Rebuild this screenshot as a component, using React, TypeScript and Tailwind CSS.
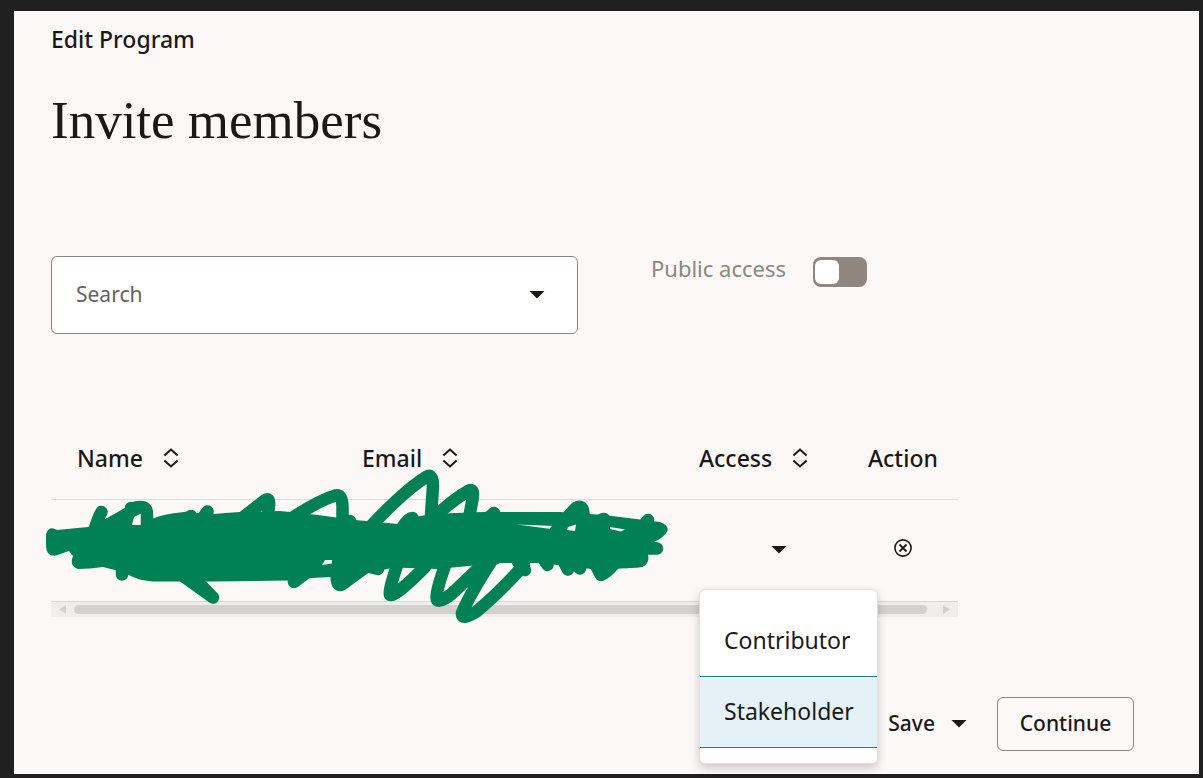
import React, { useState } from "react";

interface Column {
  key: string;
  label: string;
  sortable: boolean;
}

const columns: Column[] = [
  { key: "name", label: "Name", sortable: true },
  { key: "email", label: "Email", sortable: true },
  { key: "access", label: "Access", sortable: true },
  { key: "action", label: "Action", sortable: false },
];

const accessOptions = ["Contributor", "Stakeholder"];

const Caret = () => (
  <svg width="16" height="8" viewBox="0 0 16 8" fill="currentColor" aria-hidden="true">
    <path d="M0.5 0h15L8 7.5z" />
  </svg>
);

const SortIcon = () => (
  <svg
    width="16"
    height="20"
    viewBox="0 0 16 20"
    fill="none"
    stroke="currentColor"
    strokeWidth="2"
    aria-hidden="true"
  >
    <path d="M1.4 7.600 8 1.500l6.600 6.100M1.400 12.400 8 18.500l6.600-6.100" />
  </svg>
);

const RemoveIcon = () => (
  <svg
    width="18"
    height="18"
    viewBox="0 0 18 18"
    fill="none"
    stroke="currentColor"
    strokeWidth="1.6"
    aria-hidden="true"
  >
    <circle cx="9" cy="9" r="8.1" />
    <path d="m5.500 5.500 7 7m0-7-7 7" strokeWidth="1.8" />
  </svg>
);

// marker scribble that hides the name and email of the member
const Scribble = () => (
  <svg
    className="pointer-events-none absolute -left-[5px] top-[51px]"
    width="624"
    height="158"
    viewBox="46 468 624 158"
    aria-hidden="true"
  >
    <path
      fill="#008055"
      fillRule="evenodd"
      d="M46 534Q49 525 57 530L88 527 104 520 126 508 148 507 152 519Q162 514 184 512L214 514 225 513 240 512 280 511 318 515 355 520 398 524 420 516Q440 513 485 512L560 512 604 515 660 522Q670 526 667 532Q663 538 654 542L658 543Q665 548 660 554L648 554.500Q650 564 642 567L600 570 540 563 500 563 437 569 395 567.500 350 576 312 578 287 580.500 215 581.500 152 581.500Q138 580 131 576L115 570 103 567Q90 569 78 569Q69 566 73 556L69 551 56 555.500Q46 557 46 545zM134 517 141 513.500 141 525 132 525zM517 524.500 555 526 551 529zM568 527 576 524.500 575 531 567 530zM610 527 625 529.500 621 531.500 610 529zM325 560 332 560 332 563.500 322 565z"
    />
    <path
      fill="none"
      stroke="#008055"
      strokeWidth="12.5"
      strokeLinecap="round"
      strokeLinejoin="round"
      d="M94 532Q98 517 101.500 512M106 526 127 514M131 508 131 508M131 509Q147 503 147 514L147 530M185 519 191 516M202 519 207.500 511.500M241 519 264 501Q270 496 269 506L267.500 520M292 518Q320 500 334 496Q343 492 342.500 510L342.500 522M347 522 350 521M371 526Q404 491 426 477Q433 473 433 486L431 515M438 514Q454 499 469 490.500Q475 488 472 502L469 518M402 528Q408 518 412.500 518M488 518 494 513M555 532Q570 514 576 508Q583 504 583.500 514L583 527M590 534Q598 519 604 519M640 530 648 520M66 536 55 540M122 567 122 574.500M176 571 213 597.500M192 576 213 597.500M293 570 294 582 310 570M337 567Q335 588 342 584.500L370 564M358 564 378 569M399 560Q388 591 390 595Q395 597 425 567M447 560Q434 596 437 600Q442 604 460 586L486 561M492 560Q470 594 462 613Q461 621 476 612Q498 594 524 565M493 556 495 558.500M518 562 525 570M544 560 547.500 565M564 562 568 569.500M574 562 580 568.500M593 560 601 575Q606 573 614 564M626 562 640 561M640 548 657 548.500"
    />
  </svg>
);

const App: React.FC = () => {
  const [publicAccess, setPublicAccess] = useState(false);
  const [access, setAccess] = useState("Stakeholder");
  const [menuOpen, setMenuOpen] = useState(true);

  const handleSelect = (option: string) => {
    setAccess(option);
    setMenuOpen(false);
  };

  return (
    <div className="flex min-h-screen bg-[#202020] pt-[11px] pr-1 pb-1 pl-[14px] font-['Noto_Sans',sans-serif] text-[#1b1917]">
      <main className="min-w-0 flex-1 bg-[#fcf8f7] px-[37px] pt-3 pb-[23px]">
        <p className="text-[23px] leading-8 font-medium">Edit Program</p>
        <h1 className="mt-8 font-['Liberation_Serif',serif] text-[53px] leading-[66px]">
          Invite members
        </h1>

        <div className="mt-[103px] flex items-start">
          <div className="flex h-[78px] w-full max-w-[527px] items-center rounded-md border border-[#8b8580] bg-white pr-8 pl-6">
            <input
              type="text"
              aria-label="Search"
              placeholder="Search"
              className="min-w-0 flex-1 bg-transparent text-[21px] outline-none placeholder:text-[#646260]"
            />
            <button type="button" aria-label="Show people">
              <Caret />
            </button>
          </div>
          <label className="ml-[73px] flex shrink-0 items-start gap-[27px] text-[22px] leading-6 text-[#8b8784]">
            Public access
            <input
              type="checkbox"
              role="switch"
              checked={publicAccess}
              onChange={(e) => setPublicAccess(e.target.checked)}
              className="mt-px flex h-[30px] w-[54px] appearance-none items-center rounded-lg bg-[#8f8680] px-[2px] before:h-6 before:w-6 before:rounded-md before:bg-white checked:justify-end"
            />
          </label>
        </div>

        <div className="relative mt-[83px] max-w-[907px]">
          <table className="w-full table-fixed text-left">
            <colgroup>
              <col className="w-[285px]" />
              <col className="w-[337px]" />
              <col className="w-[169px]" />
              <col />
            </colgroup>
            <thead>
              <tr className="h-[82px] border-b border-[#dfdcda]">
                {columns.map((column) => (
                  <th key={column.key} className="pl-[26px] text-[23px] font-medium">
                    {column.sortable ? (
                      <button type="button" className="flex items-center gap-5">
                        {column.label}
                        <SortIcon />
                      </button>
                    ) : (
                      column.label
                    )}
                  </th>
                ))}
              </tr>
            </thead>
            <tbody>
              <tr className="h-[102px] border-b border-[#d9d7d5]">
                <td></td>
                <td></td>
                <td className="relative pl-[98px]">
                  <button
                    type="button"
                    aria-label="Change access"
                    aria-haspopup="listbox"
                    aria-expanded={menuOpen}
                    onClick={() => setMenuOpen(!menuOpen)}
                    className="block py-2"
                  >
                    <Caret />
                  </button>
                  {menuOpen && (
                    <div
                      role="listbox"
                      aria-label="Access"
                      className="absolute top-[89px] left-[26px] z-10 w-[179px] rounded-md border border-[#e3e1df] bg-white pt-4 pb-[15px] shadow-[0_4px_10px_rgba(0,0,0,0.2)]"
                    >
                      {accessOptions.map((option) => (
                        <button
                          key={option}
                          type="button"
                          role="option"
                          aria-selected={option === access}
                          onClick={() => handleSelect(option)}
                          className="block h-[70px] w-full pl-6 text-left text-[23px] aria-selected:h-[72px] aria-selected:border-y aria-selected:border-[#227e9e] aria-selected:bg-[#e4f1f7]"
                        >
                          {option}
                        </button>
                      ))}
                    </div>
                  )}
                </td>
                <td className="pl-[52px]">
                  <button type="button" aria-label="Remove member" className="block pb-1">
                    <RemoveIcon />
                  </button>
                </td>
              </tr>
            </tbody>
          </table>
          <div className="flex h-[15px] items-center gap-2 bg-[#efeeec] px-2 text-[#d3d1cf]">
            <svg width="7" height="9" viewBox="0 0 7 9" fill="currentColor" aria-hidden="true">
              <path d="M7 0v9L0 4.500z" />
            </svg>
            <div className="mr-2 h-[9px] flex-1 rounded-full bg-[#d3d1cf]"></div>
            <svg width="7" height="9" viewBox="0 0 7 9" fill="currentColor" aria-hidden="true">
              <path d="M0 0v9l7-4.500z" />
            </svg>
          </div>
          <Scribble />
        </div>

        <div className="mt-20 mr-7 flex items-center justify-end text-[21px] font-medium">
          <button type="button">Save</button>
          <button type="button" aria-label="More save options" className="ml-4">
            <Caret />
          </button>
          <button
            type="button"
            className="ml-[30px] h-[54px] w-[137px] rounded-md border border-[#8b8580]"
          >
            Continue
          </button>
        </div>
      </main>
    </div>
  );
};

export default App;
